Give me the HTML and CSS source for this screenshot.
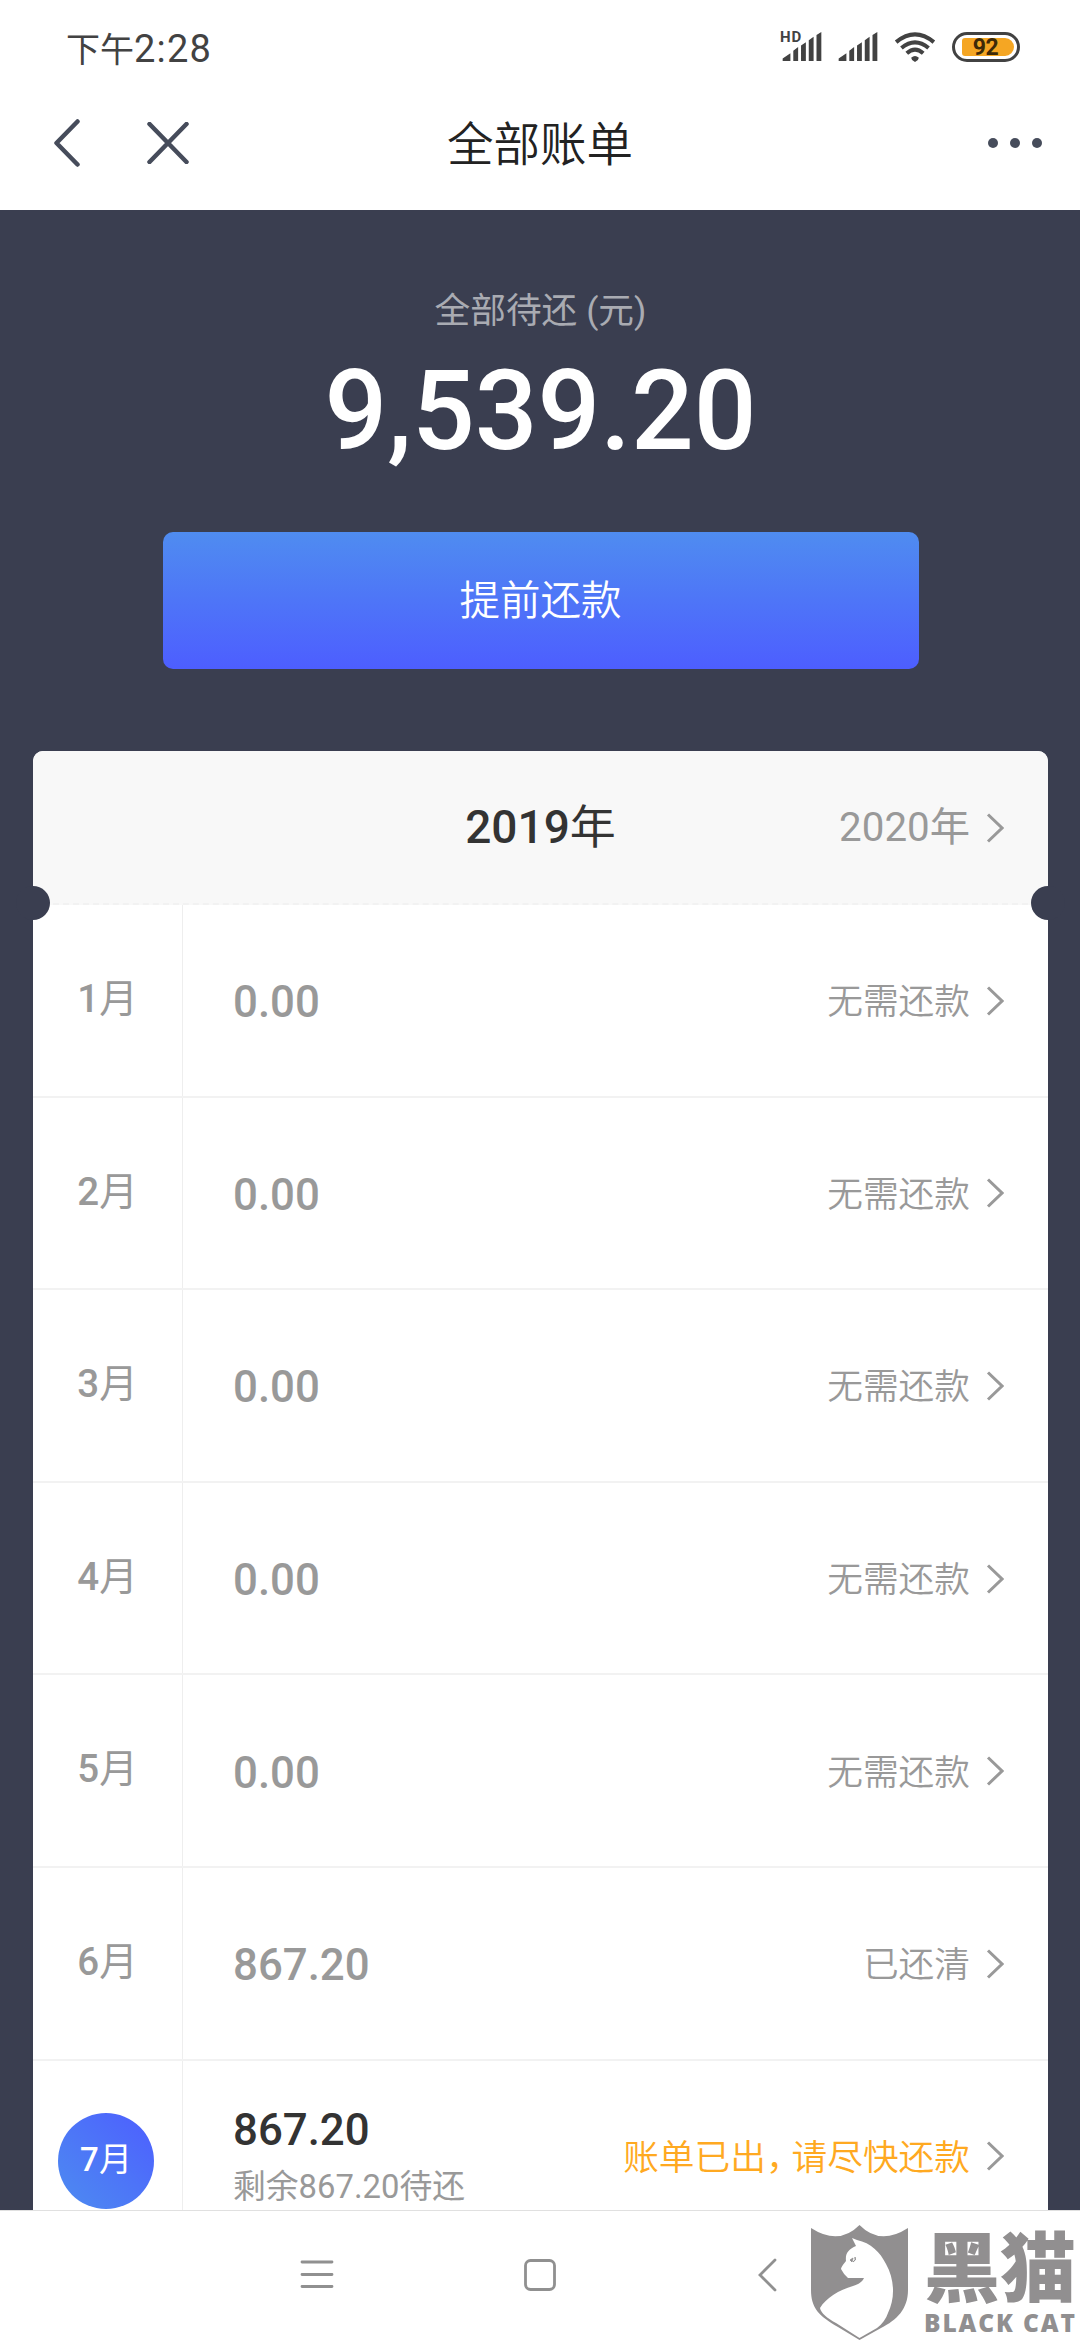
FILE: index.html
```html
<!DOCTYPE html>
<html lang="zh-CN">
<head>
  <meta charset="UTF-8">
  <title>全部账单</title>
  <link rel="stylesheet" href="styles.css">
</head>
<body>
  <!-- shared icons -->
  <svg class="sprite">
    <symbol id="arrow" viewBox="0 0 18 32">
      <path d="M2 2.500 L16 16 L2 29.500" fill="none" stroke="currentColor" stroke-width="3"/>
    </symbol>
    <symbol id="signal" viewBox="0 0 40 30">
      <path d="M0 30v-2.5L8 22v8zM11 30V19.500l5-4V30zM19 30V14l5-3.500V30zM27 30V8.500l5-3.500V30zM35 30V3l5-3v30z" fill="currentColor"/>
    </symbol>
  </svg>

  <div class="screen">
    <div class="status-bar">
      <div class="time"><span class="period">下午</span>2:28</div>
      <div class="status-icons">
        <div class="signal-hd">
          <svg class="signal"><use href="#signal"/></svg>
          <span class="hd">HD</span>
        </div>
        <svg class="signal"><use href="#signal"/></svg>
        <svg class="wifi" viewBox="0 0 42 31">
          <g fill="none" stroke="currentColor" stroke-width="4.200">
            <path d="M1.500 10.500Q21 -5.500 40.500 10.500"/>
            <path d="M7 16.500Q21 5 35 16.500"/>
            <path d="M12.500 22Q21 14.500 29.500 22"/>
          </g>
          <path d="M17 26.500q4-3.500 8 0L24 29l-3 2-3-2z" fill="currentColor"/>
        </svg>
        <div class="battery"><span>92</span></div>
      </div>
    </div>

    <div class="nav-bar">
      <div class="nav-left">
        <svg class="nav-back" viewBox="0 0 26 48"><path d="M23.500 2.500 L2.500 24 L23.500 45.500"/></svg>
        <svg class="nav-close" viewBox="0 0 42 42"><path d="M2.500 2 L39.500 40 M39.500 2 L2.500 40"/></svg>
      </div>
      <h1>全部账单</h1>
      <div class="nav-more"><i></i><i></i><i></i></div>
    </div>

    <div class="content">
      <div class="summary">
        <div class="summary-label">全部待还 (元)</div>
        <div class="summary-amount">9,539.20</div>
        <button class="repay">提前还款</button>
      </div>

      <div class="card">
        <div class="card-header">
          <div class="year">2019<span>年</span></div>
          <div class="next-year">2020年<svg class="arrow"><use href="#arrow"/></svg></div>
        </div>
        <div class="row">
          <div class="month">1<span>月</span></div>
          <div class="detail">
            <div class="amount">0.00</div>
            <div class="state"><span>无需还款</span><svg class="arrow"><use href="#arrow"/></svg></div>
          </div>
        </div>
        <div class="row">
          <div class="month">2<span>月</span></div>
          <div class="detail">
            <div class="amount">0.00</div>
            <div class="state"><span>无需还款</span><svg class="arrow"><use href="#arrow"/></svg></div>
          </div>
        </div>
        <div class="row">
          <div class="month">3<span>月</span></div>
          <div class="detail">
            <div class="amount">0.00</div>
            <div class="state"><span>无需还款</span><svg class="arrow"><use href="#arrow"/></svg></div>
          </div>
        </div>
        <div class="row">
          <div class="month">4<span>月</span></div>
          <div class="detail">
            <div class="amount">0.00</div>
            <div class="state"><span>无需还款</span><svg class="arrow"><use href="#arrow"/></svg></div>
          </div>
        </div>
        <div class="row">
          <div class="month">5<span>月</span></div>
          <div class="detail">
            <div class="amount">0.00</div>
            <div class="state"><span>无需还款</span><svg class="arrow"><use href="#arrow"/></svg></div>
          </div>
        </div>
        <div class="row">
          <div class="month">6<span>月</span></div>
          <div class="detail">
            <div class="amount">867.20</div>
            <div class="state"><span>已还清</span><svg class="arrow"><use href="#arrow"/></svg></div>
          </div>
        </div>
        <div class="row current">
          <div class="month"><div class="badge">7<span>月</span></div></div>
          <div class="detail">
            <div>
              <div class="amount">867.20</div>
              <div class="remain">剩余867.20待还</div>
            </div>
            <div class="state"><span class="due">账单已出<span class="comma">，</span>请尽快还款</span><svg class="arrow"><use href="#arrow"/></svg></div>
          </div>
        </div>
      </div>
    </div>

    <div class="system-bar">
      <svg class="key" viewBox="0 0 36 36"><path d="M3 5h30M3 17.500h30M3 29.500h30"/></svg>
      <svg class="key" viewBox="0 0 36 36"><rect x="3.500" y="3.500" width="29" height="29" rx="5"/></svg>
      <svg class="key" viewBox="0 0 36 36"><path d="M30 3 L15 18 L30 33"/></svg>
    </div>

    <div class="watermark">
      <svg class="shield" viewBox="0 0 97 115">
        <path d="M0 3Q28 21 48.500 0Q69 21 97 3V65C97 84 86 95 70 103L48.500 115L27 102C8 91 0 83 0 65Z" fill="#918f90"/>
        <path d="M9 83C15 73 28 65 42 61C48 59 51 57 53 53H37Q33 50 30 44Q30 42 35 36C34 28 38 24 45 21L41 13L46 15C60 18 69 27 75 39C84 55 84 74 77 88Q74 97 66 103L48.500 113L25 98C16 93 10 88 9 83Z" fill="#fff"/>
        <path d="M39 35l3-2-1 4zM44 32q1 3-2 5 4-2 2-5z" fill="#918f90" stroke="#918f90" stroke-width=".8"/>
      </svg>
      <div class="brand">
        <div class="brand-cn">黑猫</div>
        <div class="brand-en">BLACK CAT</div>
      </div>
    </div>
  </div>
</body>
</html>
```

FILE: styles.css
```css
:root {
  --navy: #3a3e50;
  --gray: #999999;
  --dark: #333333;
  --line: #f2f2f2;
  --font: Roboto, "Noto Sans CJK SC", sans-serif;
}

* {
  margin: 0;
  padding: 0;
  box-sizing: border-box;
}

body {
  width: 1080px;
  font-family: var(--font);
  background: #fff;
}

.sprite {
  display: none;
}

.screen {
  position: relative;
  display: flex;
  flex-direction: column;
  height: 2340px;
  overflow: hidden;
}

.status-bar {
  display: flex;
  justify-content: space-between;
  height: 80px;
  padding: 0 60px 0 66px;
  color: #424242;
}

.time {
  height: 94px;
  line-height: 98px;
  font-size: 38px;
  letter-spacing: 1.2px;
}

.period {
  font-size: 34px;
  letter-spacing: 0;
}

.status-icons {
  display: flex;
  align-items: flex-start;
  gap: 16px;
  padding-top: 32px;
}

.signal-hd {
  position: relative;
  display: flex;
}

.hd {
  position: absolute;
  left: -2px;
  top: -3px;
  font-size: 15px;
  line-height: 17px;
  font-weight: 700;
  letter-spacing: 1px;
}

.signal {
  width: 40px;
  height: 29px;
}

.wifi {
  width: 42px;
  height: 30px;
}

.battery {
  width: 68px;
  height: 30px;
  padding: 3px 3px 3px 7px;
  border: 3px solid #424242;
  border-radius: 15px;
}

.battery span {
  display: block;
  height: 18px;
  padding-right: 5px;
  border-radius: 3px 9px 9px 3px;
  background: #f5a623;
  color: #3d2a08;
  font-size: 23px;
  font-weight: 700;
  line-height: 19px;
  letter-spacing: -0.5px;
  text-align: center;
}

.nav-bar {
  display: grid;
  grid-template-columns: 1fr auto 1fr;
  align-items: center;
  height: 130px;
  padding: 0 38px 4px 54px;
  color: #464c5b;
}

.nav-bar h1 {
  grid-column: 2;
  margin-left: -16px;
  padding-bottom: 6px;
  font-size: 46.5px;
  font-weight: 350;
  color: #222;
}

.nav-left {
  display: flex;
  align-items: center;
  gap: 67px;
}

.nav-left svg {
  fill: none;
  stroke: currentColor;
  stroke-width: 4.5;
  stroke-linecap: round;
  stroke-linejoin: round;
}

.nav-back {
  width: 26px;
  height: 48px;
}

.nav-close {
  width: 42px;
  height: 42px;
}

.nav-more {
  display: flex;
  justify-content: flex-end;
  gap: 12px;
}

.nav-more i {
  width: 10px;
  height: 10px;
  border-radius: 50%;
  background: currentColor;
}

.content {
  height: 2000px;
  padding: 0 32px 0 33px;
  overflow: hidden;
  background: var(--navy);
}

.summary {
  display: flex;
  flex-direction: column;
  align-items: center;
  height: 541px;
  padding-top: 74px;
}

.summary-label {
  font-size: 35.7px;
  line-height: 54px;
  color: #a9abb2;
}

.summary-amount {
  height: 130px;
  margin-top: 8px;
  font-size: 110.5px;
  font-weight: 500;
  line-height: 130px;
  color: #fff;
}

.repay {
  width: 756px;
  height: 137px;
  margin-top: 56px;
  padding-bottom: 6px;
  border: none;
  border-radius: 10px;
  background: linear-gradient(#4f8cf0, #4d5eff);
  font-family: var(--font);
  font-size: 40.5px;
  font-weight: 350;
  color: #fff;
}

.card {
  position: relative;
  border-radius: 10px 10px 0 0;
  background: #fff;
}

/* ticket notches */
.card::before,
.card::after {
  content: "";
  position: absolute;
  top: 135px;
  width: 34px;
  height: 34px;
  border-radius: 50%;
  background: var(--navy);
}

.card::before {
  left: -17px;
}

.card::after {
  right: -17px;
}

.card-header {
  display: grid;
  grid-template-columns: 1fr auto 1fr;
  align-items: center;
  height: 154px;
  padding: 0 44px;
  border-bottom: 2px dashed var(--line);
  border-radius: 10px 10px 0 0;
  background: #f8f8f8;
}

.year {
  grid-column: 2;
  padding-bottom: 8px;
  font-size: 46px;
  font-weight: 500;
  color: var(--dark);
}

.year span,
.month span {
  font-weight: 400;
}

.next-year {
  display: flex;
  align-items: center;
  justify-content: flex-end;
  padding-top: 2px;
  font-size: 40.3px;
  line-height: 54px;
  color: var(--gray);
}

.arrow {
  width: 18px;
  height: 32px;
  margin-left: 16px;
  color: var(--gray);
}

.row {
  display: flex;
  height: 192.6px;
  border-bottom: 2px solid var(--line);
}

.month {
  width: 150px;
  border-right: 1px solid #eee;
  font-size: 38.5px;
  font-weight: 500;
  line-height: 188px;
  text-align: center;
  color: var(--gray);
}

.detail {
  flex: 1;
  display: flex;
  align-items: center;
  justify-content: space-between;
  padding: 1px 44px 0 50px;
}

.amount {
  padding-top: 3px;
  font-size: 43.8px;
  font-weight: 500;
  line-height: 50px;
  color: var(--gray);
}

.state {
  display: flex;
  align-items: center;
  font-size: 35.7px;
  color: var(--gray);
}

.state > span {
  padding-bottom: 4px;
  font-weight: 350;
}

.current .month {
  padding: 52px 0 0 25px;
}

.current .amount {
  padding-top: 3px;
  color: var(--dark);
}

.badge {
  width: 96px;
  height: 96px;
  border-radius: 50%;
  background: linear-gradient(45deg, #4d8cf0, #4d5eff);
  color: #fff;
  font-size: 33px;
  line-height: 94px;
}

.remain {
  margin-top: 8px;
  font-size: 32.8px;
  line-height: 48px;
  color: var(--gray);
}

.due {
  color: #ffa921;
}

.comma {
  letter-spacing: -10px;
}

.system-bar {
  display: flex;
  justify-content: center;
  gap: 187px;
  height: 130px;
  padding-top: 46px;
  border-top: 1px solid #e0e0e0;
  background: #fff;
}

.key {
  width: 36px;
  height: 36px;
  fill: none;
  stroke: #909090;
  stroke-width: 2.8;
  stroke-linecap: round;
}

.watermark {
  position: absolute;
  right: 0;
  bottom: 0;
  display: flex;
  gap: 16px;
  width: 269px;
  height: 115px;
  color: #918f90;
}

.shield {
  flex: none;
  width: 97px;
  height: 115px;
}

.brand-cn {
  height: 86px;
  font-family: "Noto Sans CJK SC", sans-serif;
  font-size: 76px;
  font-weight: 900;
  line-height: 77px;
}

.brand-en {
  font-family: "Open Sans", sans-serif;
  font-size: 24.5px;
  font-weight: 800;
  line-height: 24px;
  letter-spacing: 1.9px;
  white-space: nowrap;
}
```
